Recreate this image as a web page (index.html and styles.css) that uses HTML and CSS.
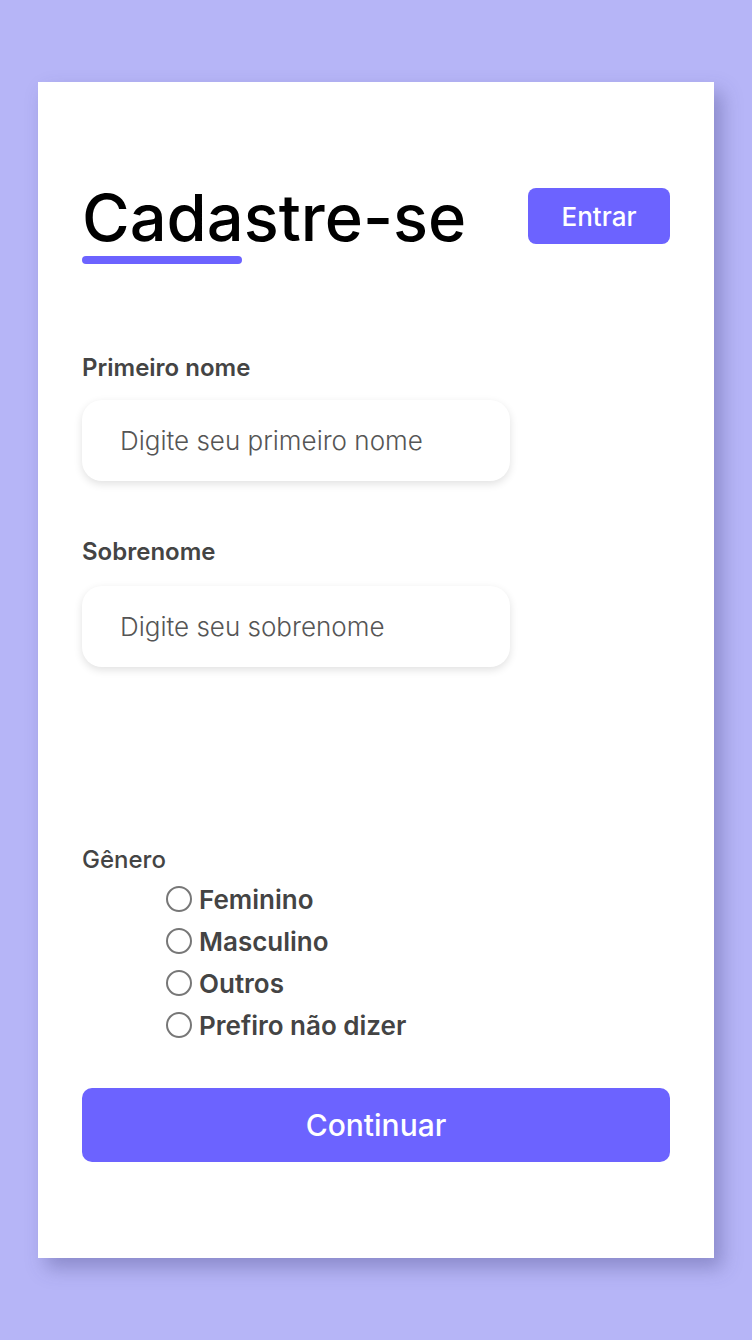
FILE: index.html
```html
<!DOCTYPE html>
<html lang="pt-BR">
<head>
  <meta charset="UTF-8">
  <title>Cadastre-se</title>
  <link rel="stylesheet" href="styles.css">
</head>
<body>
  <div class="card">
    <div class="header">
      <div class="title-box">
        <h1>Cadastre-se</h1>
        <div class="title-bar"></div>
      </div>
      <button class="btn-login" type="button">Entrar</button>
    </div>

    <form class="form">
      <label class="field-label" for="firstname">Primeiro nome</label>
      <input class="field" id="firstname" type="text" placeholder="Digite seu primeiro nome">

      <label class="field-label second" for="lastname">Sobrenome</label>
      <input class="field" id="lastname" type="text" placeholder="Digite seu sobrenome">

      <div class="field-label gender">Gênero</div>
      <div class="radios">
        <label class="radio"><input type="radio" name="gender"> Feminino</label>
        <label class="radio"><input type="radio" name="gender"> Masculino</label>
        <label class="radio"><input type="radio" name="gender"> Outros</label>
        <label class="radio"><input type="radio" name="gender"> Prefiro não dizer</label>
      </div>

      <button class="btn-continue" type="submit">Continuar</button>
    </form>
  </div>
</body>
</html>
```

FILE: styles.css
```css
* {
  box-sizing: border-box;
}
body {
  margin: 0;
  padding: 82px 38px;
  background-color: #b6b5f7;
  font-family: "Inter", "Noto Sans", sans-serif;
  color: #444;
}
.card {
  background-color: #fff;
  padding: 98px 44px 96px;
  box-shadow: 8px 10px 18px rgba(60, 60, 120, 0.35);
}
.header {
  display: flex;
  justify-content: space-between;
  align-items: flex-start;
}
h1 {
  margin: 0;
  font-size: 65px;
  line-height: 76px;
  font-weight: 500;
  color: #000;
}
.title-bar {
  width: 160px;
  height: 8px;
  border-radius: 4px;
  background-color: #6c63ff;
}
.btn-login {
  margin-top: 8px;
  width: 142px;
  height: 56px;
  border: none;
  border-radius: 8px;
  background-color: #6c63ff;
  color: #fff;
  font-family: inherit;
  font-size: 26px;
  font-weight: 500;
  cursor: pointer;
}
.form {
  display: flex;
  flex-direction: column;
  align-items: flex-start;
}
.field-label {
  display: block;
  margin-top: 90px;
  font-size: 24px;
  line-height: 28px;
  font-weight: 600;
  color: #444;
}
.field-label.second {
  margin-top: 57px;
}
.field-label.gender {
  margin-top: 179px;
  font-weight: 500;
}
.field {
  margin-top: 18px;
  width: 428px;
  height: 81px;
  padding: 0 38px;
  border: none;
  border-radius: 20px;
  background-color: #fff;
  box-shadow: 0 3px 8px rgba(0, 0, 0, 0.12);
  font-family: inherit;
  font-size: 26px;
  color: #333;
  outline: none;
}
.second + .field {
  margin-top: 20px;
}
.field::placeholder {
  color: #555;
  font-weight: 300;
}
.radios {
  margin-top: 4px;
  margin-left: 84px;
}
.radio {
  display: flex;
  align-items: center;
  gap: 7px;
  height: 42px;
  font-size: 26px;
  font-weight: 600;
  color: #444;
}
.radio input {
  appearance: none;
  margin: 0;
  width: 26px;
  height: 26px;
  border: 2px solid #777;
  border-radius: 50%;
  background-color: #fff;
}
.radio input:checked {
  border: 7px solid #6c63ff;
}
.btn-continue {
  margin-top: 42px;
  width: 100%;
  height: 74px;
  border: none;
  border-radius: 10px;
  background-color: #6c63ff;
  color: #fff;
  font-family: inherit;
  font-size: 30px;
  font-weight: 500;
  cursor: pointer;
}
```
